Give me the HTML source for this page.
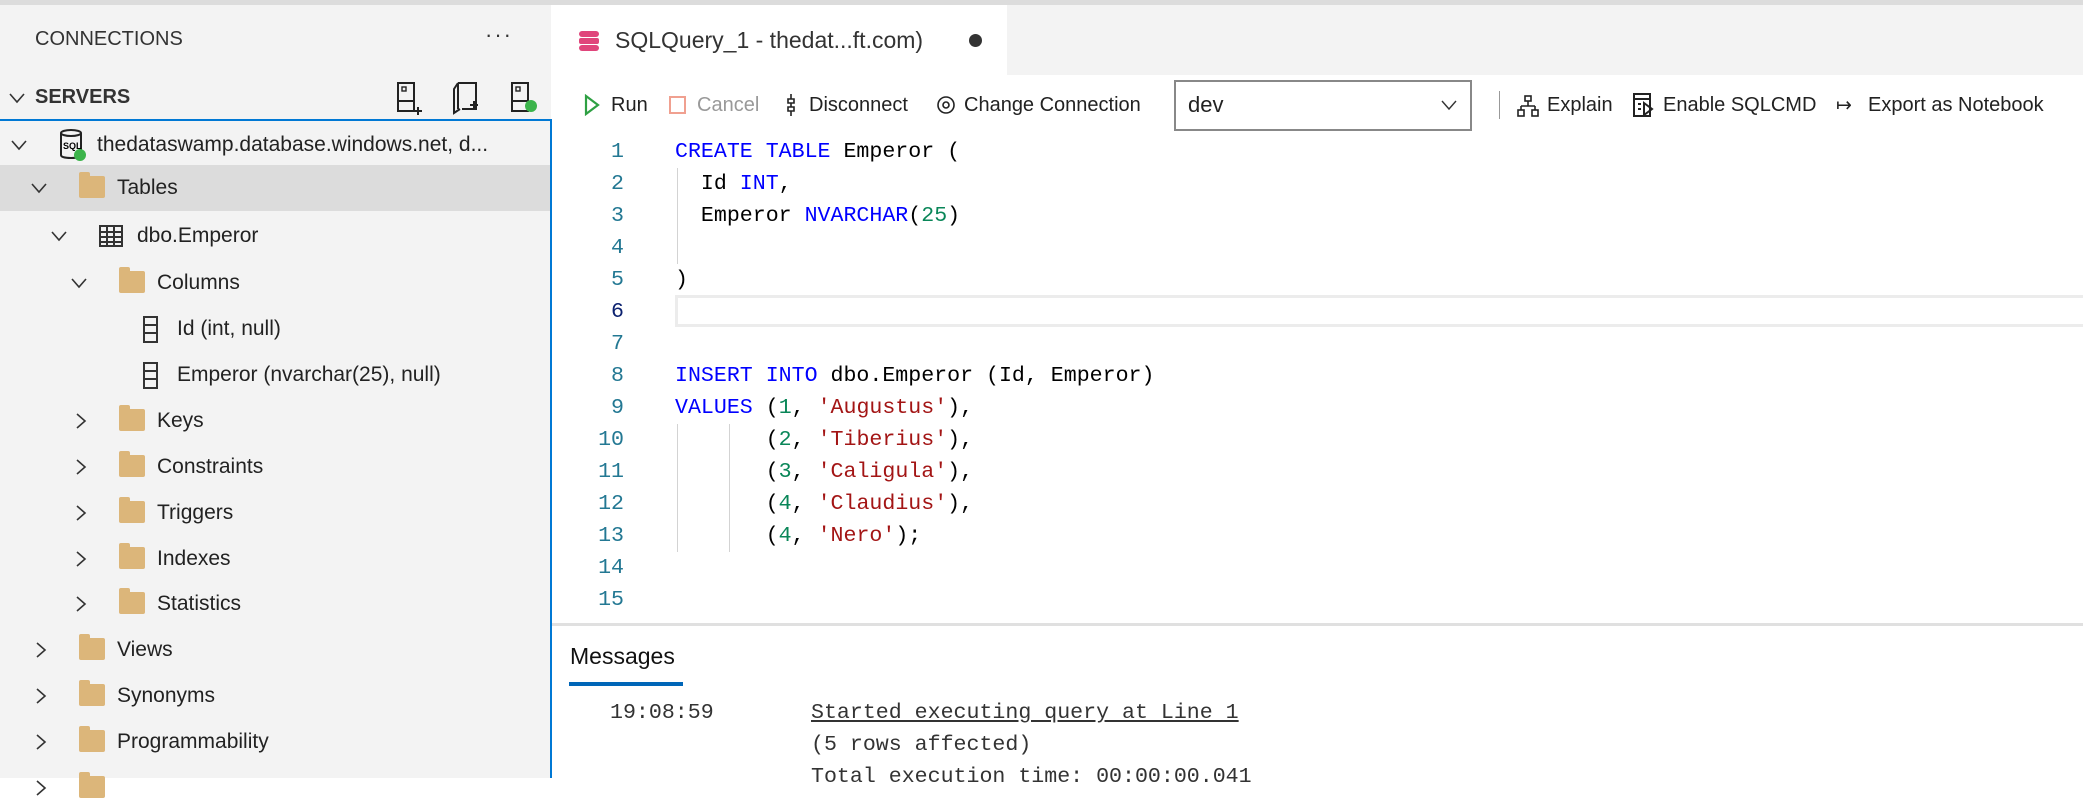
<!DOCTYPE html>
<html><head><meta charset="utf-8"><style>
*{margin:0;padding:0;box-sizing:border-box}
body{width:2083px;height:778px;overflow:hidden;background:#fff;font-family:"Liberation Sans",sans-serif;color:#222;position:relative}
.a{position:absolute;white-space:nowrap}
#top{left:0;top:0;width:2083px;height:5px;background:#dcdcdc}
#side{left:0;top:5px;width:551px;height:773px;background:#f3f3f3}
#sideb{left:550px;top:119px;width:2px;height:659px;background:#0078d4}
#sidet{left:0;top:119px;width:552px;height:2px;background:#0078d4}
.row{position:absolute;left:0;width:550px;height:46px;font-size:21px;line-height:46px}
.chev{position:absolute;top:14px;width:18px;height:18px}
.fold{position:absolute;top:11px;width:26px;height:22px;background:#dcb67a;border-radius:2px}
.fold:before{content:"";position:absolute;left:0;top:-4px;width:11px;height:6px;background:#dcb67a;border-radius:2px 2px 0 0}
.code{font-family:"Liberation Mono",monospace;font-size:21.6px;line-height:32px;color:#000}
pre.code{white-space:pre}
.ln{position:absolute;left:560px;width:64px;text-align:right;color:#237893}
.k{color:#0000ff}.n{color:#098658}.s{color:#a31515}
.tb{font-size:20px;top:94px;color:#222}
</style></head><body>
<div class="a" id="top"></div>
<div class="a" id="side"></div>
<div class="a" style="left:35px;top:28px;font-size:20px;color:#333">CONNECTIONS</div>
<div class="a" style="left:485px;top:22px;font-size:22px;letter-spacing:2px;color:#333">···</div>
<svg class="a" style="left:8px;top:90px" width="18" height="16"><path d="M2 4l7 8 7-8" fill="none" stroke="#333" stroke-width="1.6"/></svg>
<div class="a" style="left:35px;top:86px;font-size:20px;font-weight:bold;color:#333">SERVERS</div>
<svg class="a" style="left:396px;top:81px" width="145" height="34" fill="none" stroke="#222" stroke-width="2">
<path d="M2 2h16v28H2zM2 20h16"/><rect x="6" y="6" width="4" height="4" stroke-width="1.4"/><path d="M22 26v8M18 30h8" />
<path d="M62 2h18v26H66M62 2l-4 6v24l6-4M62 2v26"/><path d="M78 20v8M74 24h8"/>
<path d="M116 2h16v28h-16zM116 20h16"/><rect x="120" y="6" width="4" height="4" stroke-width="1.4"/>
<circle cx="135" cy="25" r="6" fill="#3cb44b" stroke="none"/></svg>
<div class="a" id="sidet"></div><div class="a" id="sideb"></div>

<div class="row" style="top:122px">
<svg class="chev" style="left:10px" viewBox="0 0 18 18"><path d="M2 5l7 8 7-8" fill="none" stroke="#333" stroke-width="1.6"/></svg>
<svg class="a" style="left:57px;top:6px" width="32" height="34"><ellipse cx="14" cy="5" rx="10" ry="3" fill="none" stroke="#222" stroke-width="2"/><path d="M4 5v22c0 2 4 3 10 3s10-1 10-3V5" fill="none" stroke="#222" stroke-width="2"/><text x="6" y="21" font-size="9" font-weight="bold" font-family="Liberation Sans">SQL</text><circle cx="23" cy="27" r="6" fill="#3cb44b"/></svg>
<span class="a" style="left:97px">thedataswamp.database.windows.net, d...</span></div>
<div class="row" style="top:165px;height:46px;background:#dcdcdc">
<svg class="chev" style="left:30px" viewBox="0 0 18 18"><path d="M2 5l7 8 7-8" fill="none" stroke="#333" stroke-width="1.6"/></svg>
<div class="fold" style="left:79px"></div><span class="a" style="left:117px">Tables</span></div>
<div class="row" style="top:213px">
<svg class="chev" style="left:50px" viewBox="0 0 18 18"><path d="M2 5l7 8 7-8" fill="none" stroke="#333" stroke-width="1.6"/></svg>
<svg class="a" style="left:99px;top:12px" width="24" height="22" fill="none" stroke="#333" stroke-width="2"><rect x="1" y="1" width="22" height="20"/><path d="M1 7h22M1 12h22M1 17h22M8 1v20M15 1v20"/></svg>
<span class="a" style="left:137px">dbo.Emperor</span></div>
<div class="row" style="top:260px">
<svg class="chev" style="left:70px" viewBox="0 0 18 18"><path d="M2 5l7 8 7-8" fill="none" stroke="#333" stroke-width="1.6"/></svg>
<div class="fold" style="left:119px"></div><span class="a" style="left:157px">Columns</span></div>
<div class="row" style="top:306px"><svg class="a" style="left:143px;top:10px" width="16" height="27" fill="none" stroke="#333" stroke-width="2"><rect x="1" y="1" width="13" height="25"/><path d="M1 9h13M1 17h13"/></svg><span class="a" style="left:177px">Id (int, null)</span></div>
<div class="row" style="top:352px"><svg class="a" style="left:143px;top:10px" width="16" height="27" fill="none" stroke="#333" stroke-width="2"><rect x="1" y="1" width="13" height="25"/><path d="M1 9h13M1 17h13"/></svg><span class="a" style="left:177px">Emperor (nvarchar(25), null)</span></div>
<div class="row" style="top:398px"><svg class="chev" style="left:72px" viewBox="0 0 18 18"><path d="M5 2l8 7-8 7" fill="none" stroke="#333" stroke-width="1.6"/></svg><div class="fold" style="left:119px"></div><span class="a" style="left:157px">Keys</span></div>
<div class="row" style="top:444px"><svg class="chev" style="left:72px" viewBox="0 0 18 18"><path d="M5 2l8 7-8 7" fill="none" stroke="#333" stroke-width="1.6"/></svg><div class="fold" style="left:119px"></div><span class="a" style="left:157px">Constraints</span></div>
<div class="row" style="top:490px"><svg class="chev" style="left:72px" viewBox="0 0 18 18"><path d="M5 2l8 7-8 7" fill="none" stroke="#333" stroke-width="1.6"/></svg><div class="fold" style="left:119px"></div><span class="a" style="left:157px">Triggers</span></div>
<div class="row" style="top:536px"><svg class="chev" style="left:72px" viewBox="0 0 18 18"><path d="M5 2l8 7-8 7" fill="none" stroke="#333" stroke-width="1.6"/></svg><div class="fold" style="left:119px"></div><span class="a" style="left:157px">Indexes</span></div>
<div class="row" style="top:581px"><svg class="chev" style="left:72px" viewBox="0 0 18 18"><path d="M5 2l8 7-8 7" fill="none" stroke="#333" stroke-width="1.6"/></svg><div class="fold" style="left:119px"></div><span class="a" style="left:157px">Statistics</span></div>
<div class="row" style="top:627px"><svg class="chev" style="left:32px" viewBox="0 0 18 18"><path d="M5 2l8 7-8 7" fill="none" stroke="#333" stroke-width="1.6"/></svg><div class="fold" style="left:79px"></div><span class="a" style="left:117px">Views</span></div>
<div class="row" style="top:673px"><svg class="chev" style="left:32px" viewBox="0 0 18 18"><path d="M5 2l8 7-8 7" fill="none" stroke="#333" stroke-width="1.6"/></svg><div class="fold" style="left:79px"></div><span class="a" style="left:117px">Synonyms</span></div>
<div class="row" style="top:719px"><svg class="chev" style="left:32px" viewBox="0 0 18 18"><path d="M5 2l8 7-8 7" fill="none" stroke="#333" stroke-width="1.6"/></svg><div class="fold" style="left:79px"></div><span class="a" style="left:117px">Programmability</span></div>
<div class="row" style="top:765px"><svg class="chev" style="left:32px" viewBox="0 0 18 18"><path d="M5 2l8 7-8 7" fill="none" stroke="#333" stroke-width="1.6"/></svg><div class="fold" style="left:79px"></div></div>

<!-- tab bar -->
<div class="a" style="left:552px;top:5px;width:1531px;height:70px;background:#f3f3f3"></div>
<div class="a" style="left:552px;top:5px;width:455px;height:70px;background:#fff"></div>
<svg class="a" style="left:578px;top:30px" width="22" height="22"><rect x="1" y="1" width="20" height="6" rx="3" fill="#e0457b"/><rect x="1" y="8" width="20" height="6" rx="2" fill="#e0457b"/><rect x="1" y="15" width="20" height="6" rx="3" fill="#e0457b"/></svg>
<div class="a" style="left:615px;top:27px;font-size:23px;color:#333">SQLQuery_1 - thedat...ft.com)</div>
<div class="a" style="left:969px;top:34px;width:13px;height:13px;border-radius:50%;background:#333"></div>

<!-- toolbar -->
<svg class="a" style="left:584px;top:94px" width="16" height="22"><path d="M2 2l12 9-12 9z" fill="none" stroke="#2ea043" stroke-width="2.2"/></svg>
<div class="a tb" style="left:611px">Run</div>
<div class="a" style="left:669px;top:96px;width:17px;height:18px;border:2px solid #f0a090"></div>
<div class="a tb" style="left:697px;color:#999">Cancel</div>
<svg class="a" style="left:783px;top:93px" width="16" height="24" fill="none" stroke="#222" stroke-width="1.6"><path d="M8 1v5M5 6h6v4H5zM8 10v4M5 14h6v4H5zM8 18v5"/></svg>
<div class="a tb" style="left:809px">Disconnect</div>
<svg class="a" style="left:935px;top:94px" width="22" height="22" fill="none" stroke="#222" stroke-width="1.6"><circle cx="11" cy="11" r="8"/><circle cx="11" cy="11" r="3"/></svg>
<div class="a tb" style="left:964px">Change Connection</div>
<div class="a" style="left:1174px;top:80px;width:298px;height:51px;border:2px solid #888;background:#fff"></div>
<div class="a" style="left:1188px;top:92px;font-size:22px;color:#222">dev</div>
<svg class="a" style="left:1440px;top:98px" width="18" height="14"><path d="M2 3l7 8 7-8" fill="none" stroke="#333" stroke-width="1.4"/></svg>
<div class="a" style="left:1499px;top:91px;width:1px;height:28px;background:#999"></div>
<svg class="a" style="left:1517px;top:95px" width="22" height="22" fill="none" stroke="#222" stroke-width="1.6"><rect x="8" y="1" width="6" height="5"/><path d="M11 6v5M4 11h14M4 11v4M18 11v4"/><rect x="1" y="15" width="6" height="6"/><rect x="15" y="15" width="6" height="6"/></svg>
<div class="a tb" style="left:1547px">Explain</div>
<svg class="a" style="left:1632px;top:93px" width="24" height="26" fill="none" stroke="#222" stroke-width="2"><path d="M2 1h16v22H2zM2 6h16"/><path d="M6 11h3M6 16h3M12 10l8 6-8 6z"/></svg>
<div class="a tb" style="left:1663px">Enable SQLCMD</div>
<div class="a tb" style="left:1836px;font-size:19px">↦</div>
<div class="a tb" style="left:1868px">Export as Notebook</div>

<!-- code -->
<div class="a" style="left:675px;top:295px;width:1408px;height:32px;border:3px solid #ececec;border-right:none"></div>
<div class="a" style="left:677px;top:168px;width:1px;height:96px;background:#d3d3d3"></div>
<div class="a" style="left:677px;top:424px;width:1px;height:128px;background:#d3d3d3"></div>
<div class="a" style="left:729px;top:424px;width:1px;height:128px;background:#d3d3d3"></div>
<div class="a code" style="left:0;top:136px;width:2083px">
<div class="ln" style="top:0">1</div><div class="ln" style="top:32px">2</div><div class="ln" style="top:64px">3</div><div class="ln" style="top:96px">4</div><div class="ln" style="top:128px">5</div><div class="ln" style="top:160px;color:#0b216f">6</div><div class="ln" style="top:192px">7</div><div class="ln" style="top:224px">8</div><div class="ln" style="top:256px">9</div><div class="ln" style="top:288px">10</div><div class="ln" style="top:320px">11</div><div class="ln" style="top:352px">12</div><div class="ln" style="top:384px">13</div><div class="ln" style="top:416px">14</div><div class="ln" style="top:448px">15</div><div class="ln" style="top:480px">16</div>
<pre class="a code" style="left:675px;top:0"><span class="k">CREATE TABLE</span> Emperor (
  Id <span class="k">INT</span>,
  Emperor <span class="k">NVARCHAR</span>(<span class="n">25</span>)

)


<span class="k">INSERT INTO</span> dbo.Emperor (Id, Emperor)
<span class="k">VALUES</span> (<span class="n">1</span>, <span class="s">'Augustus'</span>),
       (<span class="n">2</span>, <span class="s">'Tiberius'</span>),
       (<span class="n">3</span>, <span class="s">'Caligula'</span>),
       (<span class="n">4</span>, <span class="s">'Claudius'</span>),
       (<span class="n">4</span>, <span class="s">'Nero'</span>);</pre>
</div>

<!-- messages -->
<div class="a" style="left:552px;top:623px;width:1531px;height:155px;background:#fff;border-top:3px solid #e0e0e0"></div>
<div class="a" style="left:570px;top:643px;font-size:23px;color:#111">Messages</div>
<div class="a" style="left:569px;top:682px;width:114px;height:4px;background:#0066b8"></div>
<div class="a code" style="left:610px;top:697px;color:#333">19:08:59</div>
<div class="a code" style="left:811px;top:697px;color:#333;text-decoration:underline">Started executing query at Line 1</div>
<div class="a code" style="left:811px;top:729px;color:#333">(5 rows affected)</div>
<div class="a code" style="left:811px;top:761px;color:#333">Total execution time: 00:00:00.041</div>
</body></html>
